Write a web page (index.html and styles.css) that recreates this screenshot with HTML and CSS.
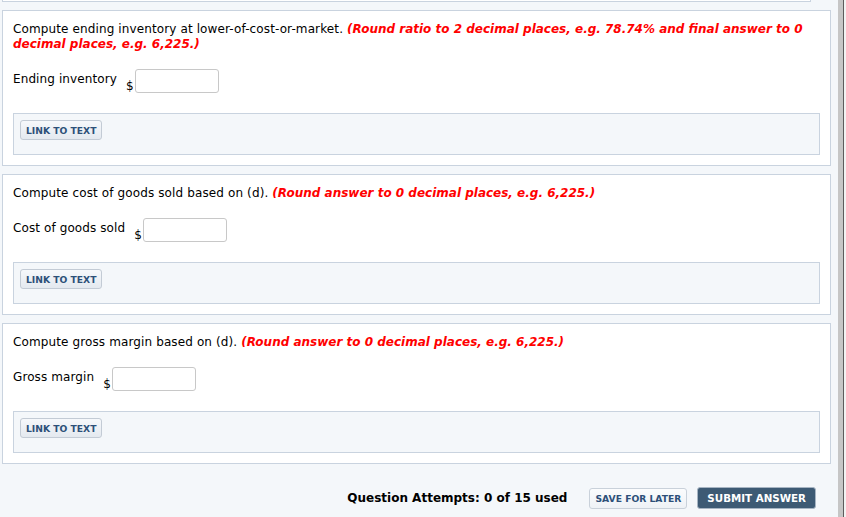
FILE: index.html
```html
<!DOCTYPE html>
<html lang="en">
<head>
  <meta charset="UTF-8" />
  <title>Question</title>
  <link rel="stylesheet" href="styles.css">
</head>
<body>
  <div class="page">
    <div class="panel stub"></div>

    <div class="panel">
      <p class="question">Compute ending inventory at lower-of-cost-or-market. <em class="hint">(Round ratio to 2 decimal places, e.g. 78.74% and final answer to 0 decimal places, e.g. 6,225.)</em></p>
      <div class="answer-row">
        <label class="label" for="ending">Ending inventory</label>
        <span class="dollar">$</span>
        <input id="ending" class="amount" type="text">
      </div>
      <div class="links">
        <button class="link-btn">LINK TO TEXT</button>
      </div>
    </div>

    <div class="panel">
      <p class="question">Compute cost of goods sold based on (d). <em class="hint">(Round answer to 0 decimal places, e.g. 6,225.)</em></p>
      <div class="answer-row">
        <label class="label" for="cogs">Cost of goods sold</label>
        <span class="dollar">$</span>
        <input id="cogs" class="amount" type="text">
      </div>
      <div class="links">
        <button class="link-btn">LINK TO TEXT</button>
      </div>
    </div>

    <div class="panel">
      <p class="question">Compute gross margin based on (d). <em class="hint">(Round answer to 0 decimal places, e.g. 6,225.)</em></p>
      <div class="answer-row">
        <label class="label" for="margin">Gross margin</label>
        <span class="dollar">$</span>
        <input id="margin" class="amount" type="text">
      </div>
      <div class="links">
        <button class="link-btn">LINK TO TEXT</button>
      </div>
    </div>

    <div class="footer">
      <span class="attempts">Question Attempts: 0 of 15 used</span>
      <button class="save-btn">SAVE FOR LATER</button>
      <button class="submit-btn">SUBMIT ANSWER</button>
    </div>
  </div>
  <div class="edge"></div>
</body>
</html>
```

FILE: styles.css
```css
body {
  margin: 0;
  display: flex;
  min-height: 100vh;
  background: #f4f7fa;
  font-family: "DejaVu Sans", Verdana, sans-serif;
  font-size: 12px;
  color: #000;
}

.page {
  flex: 0 0 838px;
}

.edge {
  flex: 1;
  background: linear-gradient(to right, #c6c6c6 0 5px, #5c5c5c 5px 6px, #f2f2f2 6px);
}

.panel {
  width: 807px;
  margin: 0 0 8px 2px;
  padding: 10px;
  background: #fff;
  border: 1px solid #c9d3df;
}

.stub {
  height: 1px;
  padding: 0;
  border-top: none;
}

.question {
  margin: 0;
  padding-top: 1px;
  line-height: 15px;
  letter-spacing: 0.12px;
}

.hint {
  color: #f00;
  font-weight: bold;
  letter-spacing: 0;
}

.answer-row {
  display: flex;
  height: 24px;
  margin: 17px 0 20px;
}

.label {
  margin-top: 3px;
  letter-spacing: 0.1px;
}

.dollar {
  align-self: flex-end;
  margin: 0 1px 0 9px;
  line-height: 14px;
}

.amount {
  width: 84px;
  height: 24px;
  box-sizing: border-box;
  border: 1px solid #c8c8c8;
  border-radius: 3px;
  background: #fff;
}

.links {
  height: 34px;
  padding: 6px 6px 0;
  display: flex;
  align-items: flex-start;
  background: #f4f7fa;
  border: 1px solid #c9d3df;
}

button {
  font-family: "DejaVu Sans", Verdana, sans-serif;
  font-weight: bold;
  cursor: pointer;
}

.link-btn {
  height: 20px;
  padding: 0 5px;
  font-size: 9.2px;
  color: #2d5079;
  background: linear-gradient(#f6f8fb, #e4e9ef);
  border: 1px solid #c3cbd5;
  border-radius: 3px;
}

.footer {
  display: flex;
  justify-content: flex-end;
  align-items: center;
  padding: 15px 22px 0 0;
}

.attempts {
  font-weight: bold;
  font-size: 12px;
  margin-right: 22px;
}

.save-btn {
  height: 21px;
  padding: 0 5px;
  font-size: 9.2px;
  color: #2d5079;
  background: linear-gradient(#fbfcfd, #eef2f6);
  border: 1px solid #c9d1da;
  border-radius: 3px;
  margin-right: 10px;
}

.submit-btn {
  height: 22px;
  padding: 0 9px;
  font-size: 10.3px;
  color: #fff;
  background: #3d5a74;
  border: 1px solid #a7b5c3;
  border-radius: 3px;
}
```
